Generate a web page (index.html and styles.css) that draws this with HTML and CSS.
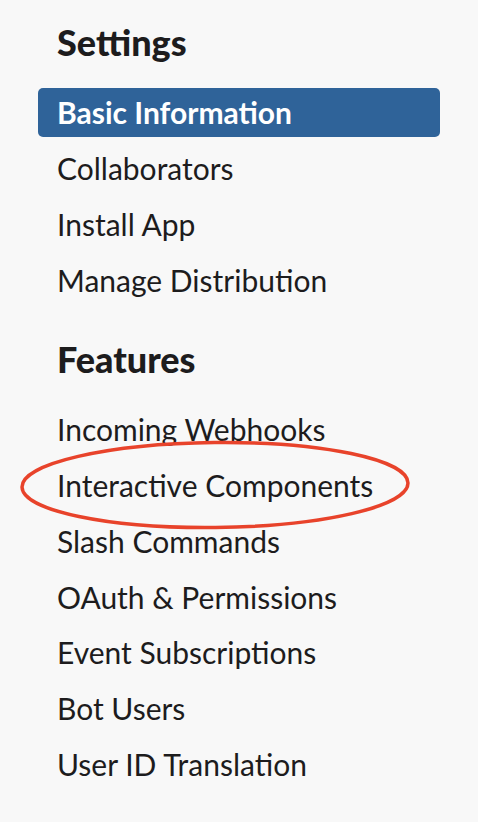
FILE: index.html
```html
<!DOCTYPE html>
<html>
<head>
<meta charset="utf-8">
<link rel="stylesheet" href="styles.css">
</head>
<body>
<nav class="sidebar">
  <section class="group">
    <h2 class="group-title">Settings</h2>
    <ul class="nav-list">
      <li class="nav-item active">Basic Information</li>
      <li class="nav-item">Collaborators</li>
      <li class="nav-item">Install App</li>
      <li class="nav-item">Manage Distribution</li>
    </ul>
  </section>
  <section class="group">
    <h2 class="group-title">Features</h2>
    <ul class="nav-list">
      <li class="nav-item">Incoming Webhooks</li>
      <li class="nav-item highlighted">Interactive Components
        <svg class="annot" width="400" height="96" viewBox="0 0 400 96" aria-hidden="true">
          <ellipse cx="197" cy="47" rx="193" ry="42.5" fill="none" stroke="#e8432b" stroke-width="3.5" transform="rotate(-0.6 197 47)"/>
        </svg>
      </li>
      <li class="nav-item">Slash Commands</li>
      <li class="nav-item">OAuth &amp; Permissions</li>
      <li class="nav-item">Event Subscriptions</li>
      <li class="nav-item">Bot Users</li>
      <li class="nav-item">User ID Translation</li>
    </ul>
  </section>
</nav>
</body>
</html>
```
FILE: styles.css
```css
html, body {
  margin: 0;
  padding: 0;
  background: #f8f8f8;
}
body {
  font-family: Lato, "Noto Sans", sans-serif;
  color: #1d1c1d;
}
.sidebar {
  padding: 22.1px 38px 0 38px;
  width: 402px;
}
.group + .group {
  margin-top: 34.2px;
}
.group-title {
  margin: 0 0 26.3px 19px;
  font-size: 36px;
  line-height: 40px;
  font-weight: 900;
}
.nav-list {
  list-style: none;
  margin: 0;
  padding: 0;
  display: flex;
  flex-direction: column;
  gap: 6.8px;
}
.nav-item {
  position: relative;
  height: 49px;
  line-height: 49px;
  padding-left: 19px;
  font-size: 30px;
  border-radius: 5px;
  white-space: nowrap;
}
.nav-item.active {
  background: #2f6399;
  color: #ffffff;
  font-weight: 700;
}
.annot {
  position: absolute;
  left: -20px;
  top: -23px;
  pointer-events: none;
}
```
